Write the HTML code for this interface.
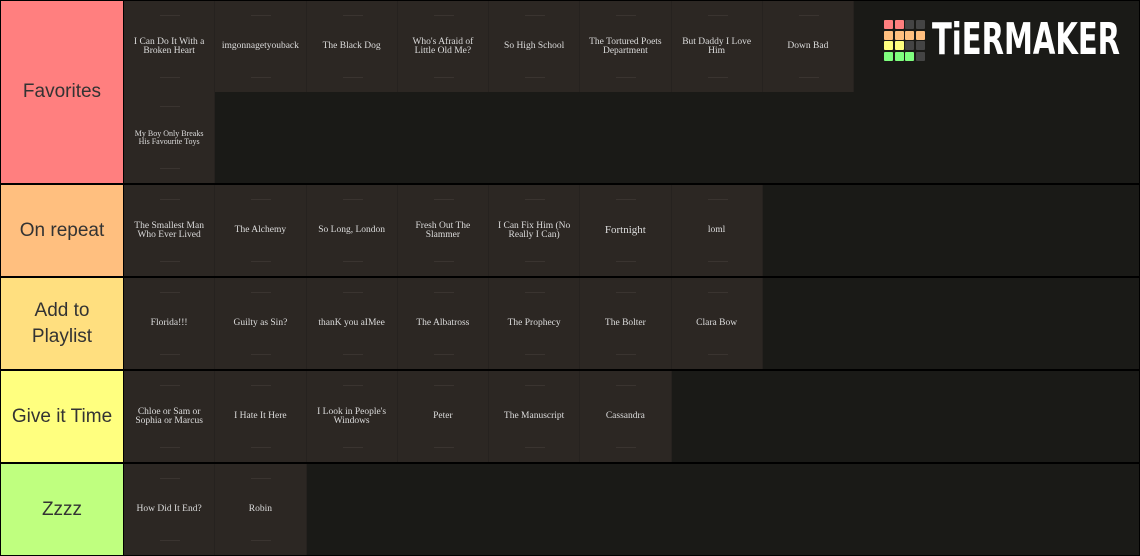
<!DOCTYPE html><html><head><style>
*{margin:0;padding:0;box-sizing:border-box}
body{width:1140px;height:556px;background:#000;overflow:hidden;font-family:"Liberation Sans",sans-serif;position:relative}
.row{position:absolute;left:1px;width:1138px;display:flex;background:#1a1a17}
.lab{width:123px;flex:none;display:flex;align-items:center;justify-content:center;text-align:center;font-size:19px;color:#333;border-right:1px solid #000;line-height:26px}
.tiles{display:flex;flex-wrap:wrap;align-content:flex-start;width:730px}
.t{width:91.25px;height:91px;background:#2c2723;display:flex;align-items:center;justify-content:center;text-align:center;font-family:"Liberation Serif",serif;color:#dcdcdc;font-size:9.5px;line-height:9px;padding:0 8px;position:relative;border-right:1px solid #26221f}
.t:before,.t:after{content:"";position:absolute;left:36px;width:20px;height:1px;background:#3a3430}
.t:before{top:14px}.t:after{bottom:14px}
.logo{position:absolute;left:884px;top:20px}
.g{position:absolute;width:9px;height:9px;border-radius:1px}
.lt{position:absolute;left:932px;top:18px;color:#fff;font-weight:bold;font-size:44px;letter-spacing:0;font-family:"DejaVu Sans",sans-serif;line-height:44px;transform:scaleX(0.66);transform-origin:left;white-space:nowrap}
</style></head><body>
<div class="row" style="top:1px;height:182px"><div class="lab" style="background:#ff7f7f">Favorites</div><div class="tiles">
<div class="t">I Can Do It With a Broken Heart</div><div class="t">imgonnagetyouback</div><div class="t">The Black Dog</div><div class="t">Who's Afraid of Little Old Me?</div><div class="t">So High School</div><div class="t">The Tortured Poets Department</div><div class="t">But Daddy I Love Him</div><div class="t">Down Bad</div><div class="t" style="font-size:8px;line-height:8px">My Boy Only Breaks His Favourite Toys</div></div></div>
<div class="row" style="top:185px;height:91px"><div class="lab" style="background:#ffbf7f">On repeat</div><div class="tiles">
<div class="t">The Smallest Man Who Ever Lived</div><div class="t">The Alchemy</div><div class="t">So Long, London</div><div class="t">Fresh Out The Slammer</div><div class="t">I Can Fix Him (No Really I Can)</div><div class="t" style="font-size:11px">Fortnight</div><div class="t">loml</div></div></div>
<div class="row" style="top:278px;height:91px"><div class="lab" style="background:#ffdf7f">Add to<br>Playlist</div><div class="tiles">
<div class="t">Florida!!!</div><div class="t">Guilty as Sin?</div><div class="t">thanK you aIMee</div><div class="t">The Albatross</div><div class="t">The Prophecy</div><div class="t">The Bolter</div><div class="t">Clara Bow</div></div></div>
<div class="row" style="top:371px;height:91px"><div class="lab" style="background:#ffff7f">Give it Time</div><div class="tiles">
<div class="t">Chloe or Sam or Sophia or Marcus</div><div class="t">I Hate It Here</div><div class="t">I Look in People's Windows</div><div class="t">Peter</div><div class="t">The Manuscript</div><div class="t">Cassandra</div></div></div>
<div class="row" style="top:464px;height:91px"><div class="lab" style="background:#bfff7f">Zzzz</div><div class="tiles">
<div class="t">How Did It End?</div><div class="t">Robin</div></div></div>
<div class="logo">
<div class="g" style="left:0;top:0;background:#ff7f7f"></div><div class="g" style="left:10.5px;top:0;background:#ff7f7f"></div><div class="g" style="left:21px;top:0;background:#444"></div><div class="g" style="left:31.5px;top:0;background:#444"></div>
<div class="g" style="left:0;top:10.5px;background:#ffbf7f"></div><div class="g" style="left:10.5px;top:10.5px;background:#ffbf7f"></div><div class="g" style="left:21px;top:10.5px;background:#ffbf7f"></div><div class="g" style="left:31.5px;top:10.5px;background:#ffbf7f"></div>
<div class="g" style="left:0;top:21px;background:#ffff7f"></div><div class="g" style="left:10.5px;top:21px;background:#ffff7f"></div><div class="g" style="left:21px;top:21px;background:#444"></div><div class="g" style="left:31.5px;top:21px;background:#444"></div>
<div class="g" style="left:0;top:31.5px;background:#7fff7f"></div><div class="g" style="left:10.5px;top:31.5px;background:#7fff7f"></div><div class="g" style="left:21px;top:31.5px;background:#7fff7f"></div><div class="g" style="left:31.5px;top:31.5px;background:#444"></div>
</div>
<div class="lt">TiERMAKER</div>
</body></html>
